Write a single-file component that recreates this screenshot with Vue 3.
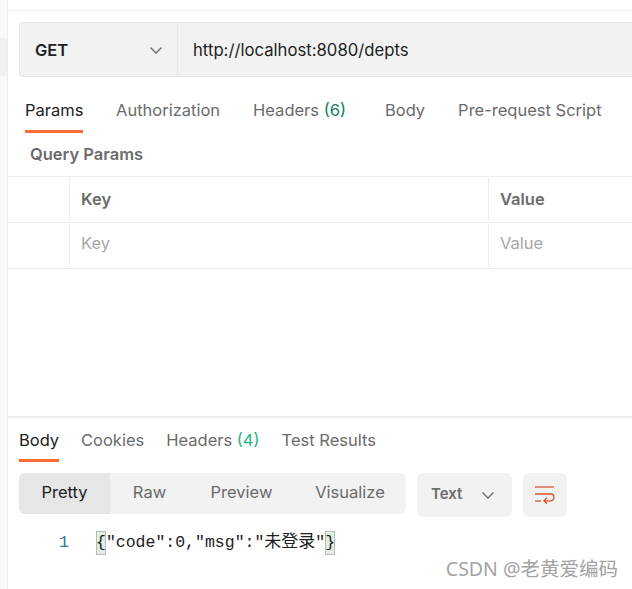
<script setup>
const reqTabs = [
  { label: 'Params', active: true },
  { label: 'Authorization' },
  { label: 'Headers', count: '(6)', countClass: 'count-teal' },
  { label: 'Body' },
  { label: 'Pre-request Script' }
]
const resTabs = [
  { label: 'Body', active: true },
  { label: 'Cookies' },
  { label: 'Headers', count: '(4)', countClass: 'count-green' },
  { label: 'Test Results' }
]
const views = ['Pretty', 'Raw', 'Preview', 'Visualize']
</script>

<template>
  <div class="app">
    <aside class="rail"><div class="rail-item"></div></aside>
    <main class="main">
      <div class="topline"></div>
      <div class="urlbar">
        <div class="method">
          <span>GET</span>
          <svg width="14" height="14" viewBox="0 0 14 14"><path d="M1.500 4.500 7 10l5.500-5.500" fill="none" stroke="#6b6b6b" stroke-width="1.300"/></svg>
        </div>
        <div class="url">http://localhost:8080/depts</div>
      </div>
      <nav class="tabs req-tabs">
        <div v-for="t in reqTabs" :key="t.label" class="tab" :class="{ active: t.active }">
          {{ t.label }} <span v-if="t.count" :class="t.countClass">{{ t.count }}</span>
        </div>
      </nav>
      <div class="qp">Query Params</div>
      <div class="table">
        <div class="row">
          <div class="c0"></div>
          <div class="c1 th">Key</div>
          <div class="c2 th">Value</div>
        </div>
        <div class="row">
          <div class="c0"></div>
          <div class="c1 ph">Key</div>
          <div class="c2 ph">Value</div>
        </div>
      </div>
      <div class="spacer"></div>
      <section class="response">
        <nav class="tabs res-tabs">
          <div v-for="t in resTabs" :key="t.label" class="tab" :class="{ active: t.active }">
            {{ t.label }} <span v-if="t.count" :class="t.countClass">{{ t.count }}</span>
          </div>
        </nav>
        <div class="toolbar">
          <div class="views">
            <div v-for="(v, i) in views" :key="v" class="view" :class="['v' + i, { on: i === 0 }]">{{ v }}</div>
          </div>
          <div class="fmt">
            <span>Text</span>
            <svg width="14" height="14" viewBox="0 0 14 14"><path d="M1.500 4.500 7 10l5.500-5.500" fill="none" stroke="#6b6b6b" stroke-width="1.300"/></svg>
          </div>
          <div class="wrap">
            <svg width="22" height="20" viewBox="0 0 22 20" fill="none" stroke="#d9512c" stroke-width="1.300">
              <path d="M1 2h19"/>
              <path d="M1 9h15.500a3.300 3.300 0 0 1 0 6.800H10"/>
              <path d="M13 12.800 10 15.800l3 3"/>
              <path d="M1 16h6"/>
            </svg>
          </div>
        </div>
        <div class="code">
          <span class="ln">1</span>
          <span class="src"><span class="br">{</span>"code":0,"msg":"<span class="cjk">未登录</span>"<span class="br">}</span></span>
        </div>
      </section>
    </main>
    <div class="mark">CSDN @老黄爱编码</div>
  </div>
</template>

<style>
html, body { margin: 0; padding: 0; background: #fff; overflow: hidden; }
</style>

<style scoped>
.app {
  position: relative;
  display: flex;
  width: 632px;
  height: 589px;
  overflow: hidden;
  font-family: Inter, "Noto Sans", sans-serif;
  font-size: 16.500px;
  color: #6b6b6b;
  background: #fff;
}
.rail {
  width: 7px;
  flex: none;
  background: #f9f9f9;
  border-right: 1px solid #ededed;
  padding-top: 38px;
  box-sizing: content-box;
}
.rail-item { height: 38px; background: #f0f0f0; }
.main { flex: 1; min-width: 0; display: flex; flex-direction: column; }
.topline { height: 10px; border-bottom: 1px solid #ededed; flex: none; }
.urlbar {
  margin: 11px 0 0 11px;
  height: 53px;
  flex: none;
  display: flex;
  background: #f2f2f2;
  border: 1px solid #e6e6e6;
  border-right: 0;
  border-radius: 4px 0 0 4px;
  width: 620px;
}
.method {
  width: 158px;
  box-sizing: border-box;
  padding: 0 14px 0 15px;
  display: flex;
  align-items: center;
  justify-content: space-between;
  border-right: 1px solid #e6e6e6;
  font-weight: 600;
  color: #212121;
}
.url { padding-left: 15px; line-height: 54px; font-size: 16.700px; color: #212121; white-space: nowrap; }
.tabs { display: flex; flex: none; white-space: nowrap; }
.tab { position: relative; }
.tab.active { color: #212121; }
.tab.active::after {
  content: "";
  position: absolute;
  left: 0;
  right: 0;
  bottom: 0;
  height: 3px;
  background: #ff6c37;
}
.req-tabs { margin: 20px 0 0 17px; height: 36px; line-height: 26px; }
.req-tabs .tab:nth-child(1) { width: 58px; margin-right: 33px; }
.req-tabs .tab:nth-child(2) { margin-right: 33px; }
.req-tabs .tab:nth-child(3) { margin-right: 39px; }
.req-tabs .tab:nth-child(4) { margin-right: 33px; }
.count-teal { color: #0c7d5e; }
.count-green { color: #26b47f; }
.qp { margin: 12px 0 0 22px; height: 31px; line-height: 18px; font-weight: 600; flex: none; }
.table { border-top: 1px solid #ededed; flex: none; }
.row { display: flex; height: 45px; border-bottom: 1px solid #ededed; }
.c0 { width: 61px; flex: none; border-right: 1px solid #ededed; margin: 1px 0; }
.c1 { width: 407px; flex: none; padding-left: 11px; box-sizing: content-box; border-right: 1px solid #ededed; margin: 1px 0; line-height: 42px; }
.c2 { padding-left: 11px; line-height: 42px; margin: 1px 0; }
.th { font-weight: 600; }
.ph { color: #a6a6a6; line-height: 38px; }
.spacer { flex: 1; }
.response { border-top: 2px solid #ededed; height: 173px; flex: none; box-sizing: border-box; padding-left: 11px; }
.res-tabs { margin-top: 7px; height: 37px; line-height: 30px; }
.res-tabs .tab:nth-child(1) { width: 40px; margin-right: 22px; }
.res-tabs .tab:nth-child(2) { margin-right: 22px; }
.res-tabs .tab:nth-child(3) { margin-right: 22px; }
.toolbar { display: flex; margin-top: 11px; align-items: flex-start; }
.views { display: flex; width: 387px; height: 41px; border-radius: 6px; background: #f2f2f2; overflow: hidden; flex: none; line-height: 39px; }
.view { box-sizing: border-box; text-align: center; }
.v0 { width: 91px; }
.v1 { width: 79px; }
.v2 { width: 105px; }
.v3 { width: 112px; }
.view.on { background: #e6e6e6; color: #212121; }
.fmt {
  margin-left: 11px;
  width: 95px;
  height: 44px;
  box-sizing: border-box;
  border-radius: 6px;
  background: #f2f2f2;
  display: flex;
  align-items: center;
  justify-content: space-between;
  padding: 0 17px 0 14px;
  font-weight: 600;
  font-size: 15px;
}
.fmt span { position: relative; top: -2px; }
.wrap {
  margin-left: 11px;
  width: 44px;
  height: 44px;
  border-radius: 6px;
  background: #f2f2f2;
  display: flex;
  align-items: center;
  justify-content: center;
}
.code {
  margin-top: 10px;
  display: flex;
  height: 30px;
  line-height: 30px;
  font-family: "Liberation Mono", "DejaVu Sans Mono", monospace;
  font-size: 16.500px;
  color: #212121;
  white-space: nowrap;
}
.ln { width: 50px; text-align: right; color: #2a7a9a; flex: none; line-height: 32px; }
.src { margin-left: 27px; line-height: 31px; }
.br { display: inline-block; height: 24px; line-height: 23px; outline: 1px solid #b9b9b9; outline-offset: -1px; background: #e3eee3; }
.cjk { font-family: "Noto Sans CJK SC", sans-serif; font-size: 17px; line-height: 1; }
.mark {
  position: absolute;
  right: 14px;
  bottom: 6px;
  font-family: "Noto Sans", "Noto Sans CJK SC", sans-serif;
  font-size: 19.500px;
  line-height: 28px;
  color: #a3a3a3;
  white-space: nowrap;
}
</style>
